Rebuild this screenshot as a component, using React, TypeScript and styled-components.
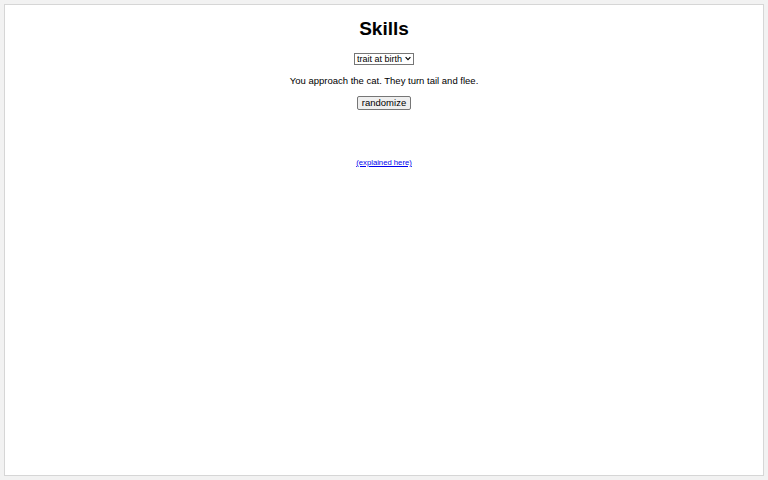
import React from "react";
import styled, { createGlobalStyle } from "styled-components";

const Global = createGlobalStyle`
  html, body { margin: 0; padding: 0; background: #f2f2f2; }
  body { font-family: "Liberation Sans", Arial, sans-serif; color: #000; }
`;

const Page = styled.div`
  box-sizing: border-box;
  width: 768px;
  height: 480px;
  padding: 4px;
`;

const Panel = styled.main`
  box-sizing: border-box;
  height: 100%;
  background: #fff;
  border: 1px solid #d6d6d6;
  display: flex;
  flex-direction: column;
  align-items: center;
  padding-top: 13px;
`;

const Title = styled.h1`
  margin: 0;
  font-size: 19px;
  font-weight: bold;
  line-height: 22px;
`;

const PickerWrap = styled.div`
  position: relative;
  margin-top: 13px;
  display: flex;
`;

const Picker = styled.select`
  appearance: none;
  -webkit-appearance: none;
  box-sizing: border-box;
  font-family: "Liberation Sans", Arial, sans-serif;
  font-size: 9px;
  color: #000;
  width: 60px;
  height: 12px;
  line-height: 10px;
  padding: 0 0 0 2px;
  border: 1px solid #767676;
  border-radius: 0;
  background: #fff;
`;

const Chevron = styled.svg`
  position: absolute;
  right: 3px;
  top: 3px;
  width: 6px;
  height: 5px;
  pointer-events: none;
`;

const Line = styled.p`
  margin: 9px 0 0;
  font-size: 9.5px;
  line-height: 13px;
`;

const Action = styled.button`
  margin-top: 9px;
  font-family: "Liberation Sans", Arial, sans-serif;
  font-size: 9.5px;
  color: #000;
  height: 14px;
  padding: 0 4px;
  line-height: 12px;
  border: 1px solid #767676;
  border-radius: 2px;
  background: #efefef;
`;

const Note = styled.a`
  margin-top: 48px;
  font-size: 7.7px;
  color: #0000ee;
  text-decoration: underline;
`;

export default function App() {
  return (
    <>
      <Global />
      <Page>
        <Panel>
          <Title>Skills</Title>
          <PickerWrap>
            <Picker defaultValue="birth">
              <option value="birth">trait at birth</option>
            </Picker>
            <Chevron viewBox="0 0 6 5">
              <path d="M0.6 1.2 L3 3.6 L5.4 1.2" fill="none" stroke="#000" strokeWidth="1.2" />
            </Chevron>
          </PickerWrap>
          <Line>You approach the cat. They turn tail and flee.</Line>
          <Action>randomize</Action>
          <Note href="#">(explained here)</Note>
        </Panel>
      </Page>
    </>
  );
}
